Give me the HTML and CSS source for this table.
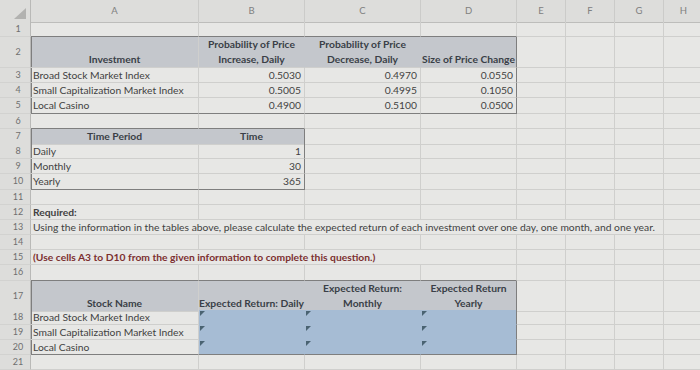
FILE: index.html
```html
<!DOCTYPE html>
<html>
<head>
<meta charset="utf-8">
<link rel="stylesheet" href="styles.css">
</head>
<body>
<div class="sheet">
  <div class="row hdr">
    <div class="c rh corner"><span class="tri"></span></div>
    <div class="c ch">A</div><div class="c ch">B</div><div class="c ch">C</div><div class="c ch">D</div>
    <div class="c ch">E</div><div class="c ch">F</div><div class="c ch">G</div><div class="c ch">H</div>
  </div>
  <div class="row h1">
    <div class="c rh">1</div><div class="c eb"></div><div class="c eb"></div><div class="c eb"></div><div class="c eb"></div>
    <div class="c"></div><div class="c"></div><div class="c"></div><div class="c"></div>
  </div>
  <div class="row h2">
    <div class="c rh">2</div>
    <div class="c th bot el">Investment</div>
    <div class="c th bot nr">Probability of Price<br>Increase, Daily</div>
    <div class="c th bot nr">Probability of Price<br>Decrease, Daily</div>
    <div class="c th bot er">Size of Price Change</div>
    <div class="c"></div><div class="c"></div><div class="c"></div><div class="c"></div>
  </div>
  <div class="row">
    <div class="c rh">3</div><div class="c tx el">Broad Stock Market Index</div>
    <div class="c num">0.5030</div><div class="c num">0.4970</div><div class="c num er">0.0550</div>
    <div class="c"></div><div class="c"></div><div class="c"></div><div class="c"></div>
  </div>
  <div class="row">
    <div class="c rh">4</div><div class="c tx el">Small Capitalization Market Index</div>
    <div class="c num">0.5005</div><div class="c num">0.4995</div><div class="c num er">0.1050</div>
    <div class="c"></div><div class="c"></div><div class="c"></div><div class="c"></div>
  </div>
  <div class="row">
    <div class="c rh">5</div><div class="c tx el eb">Local Casino</div>
    <div class="c num eb">0.4900</div><div class="c num eb">0.5100</div><div class="c num er eb">0.0500</div>
    <div class="c"></div><div class="c"></div><div class="c"></div><div class="c"></div>
  </div>
  <div class="row">
    <div class="c rh">6</div><div class="c eb"></div><div class="c eb"></div><div class="c"></div><div class="c"></div>
    <div class="c"></div><div class="c"></div><div class="c"></div><div class="c"></div>
  </div>
  <div class="row">
    <div class="c rh">7</div><div class="c th mid el nr">Time Period</div><div class="c th mid er">Time</div>
    <div class="c"></div><div class="c"></div><div class="c"></div><div class="c"></div><div class="c"></div><div class="c"></div>
  </div>
  <div class="row">
    <div class="c rh">8</div><div class="c tx el">Daily</div><div class="c num er">1</div>
    <div class="c"></div><div class="c"></div><div class="c"></div><div class="c"></div><div class="c"></div><div class="c"></div>
  </div>
  <div class="row">
    <div class="c rh">9</div><div class="c tx el">Monthly</div><div class="c num er">30</div>
    <div class="c"></div><div class="c"></div><div class="c"></div><div class="c"></div><div class="c"></div><div class="c"></div>
  </div>
  <div class="row">
    <div class="c rh">10</div><div class="c tx el eb">Yearly</div><div class="c num er eb">365</div>
    <div class="c"></div><div class="c"></div><div class="c"></div><div class="c"></div><div class="c"></div><div class="c"></div>
  </div>
  <div class="row">
    <div class="c rh">11</div><div class="c"></div><div class="c"></div><div class="c"></div><div class="c"></div>
    <div class="c"></div><div class="c"></div><div class="c"></div><div class="c"></div>
  </div>
  <div class="row">
    <div class="c rh">12</div><div class="c tx bold">Required:</div><div class="c"></div><div class="c"></div><div class="c"></div>
    <div class="c"></div><div class="c"></div><div class="c"></div><div class="c"></div>
  </div>
  <div class="row">
    <div class="c rh">13</div>
    <div class="c tx span7">Using the information in the tables above, please calculate the expected return of each investment over one day, one month, and one year.</div>
    <div class="c"></div>
  </div>
  <div class="row">
    <div class="c rh">14</div><div class="c"></div><div class="c"></div><div class="c"></div><div class="c"></div>
    <div class="c"></div><div class="c"></div><div class="c"></div><div class="c"></div>
  </div>
  <div class="row">
    <div class="c rh">15</div>
    <div class="c tx bold red span4">(Use cells A3 to D10 from the given information to complete this question.)</div>
    <div class="c"></div><div class="c"></div><div class="c"></div><div class="c"></div>
  </div>
  <div class="row">
    <div class="c rh">16</div><div class="c eb"></div><div class="c eb"></div><div class="c eb"></div><div class="c eb"></div>
    <div class="c"></div><div class="c"></div><div class="c"></div><div class="c"></div>
  </div>
  <div class="row h17">
    <div class="c rh">17</div>
    <div class="c th bot el">Stock Name</div>
    <div class="c th bot nr">Expected Return: Daily</div>
    <div class="c th bot nr">Expected Return:<br>Monthly</div>
    <div class="c th bot er">Expected Return<br>Yearly</div>
    <div class="c"></div><div class="c"></div><div class="c"></div><div class="c"></div>
  </div>
  <div class="row">
    <div class="c rh">18</div><div class="c tx el">Broad Stock Market Index</div>
    <div class="c fill flag"></div><div class="c fill flag"></div><div class="c fill flag er"></div>
    <div class="c"></div><div class="c"></div><div class="c"></div><div class="c"></div>
  </div>
  <div class="row">
    <div class="c rh">19</div><div class="c tx el">Small Capitalization Market Index</div>
    <div class="c fill flag"></div><div class="c fill flag"></div><div class="c fill flag er"></div>
    <div class="c"></div><div class="c"></div><div class="c"></div><div class="c"></div>
  </div>
  <div class="row">
    <div class="c rh">20</div><div class="c tx el eb">Local Casino</div>
    <div class="c fill flag eb"></div><div class="c fill flag eb"></div><div class="c fill flag er eb"></div>
    <div class="c"></div><div class="c"></div><div class="c"></div><div class="c"></div>
  </div>
  <div class="row">
    <div class="c rh">21</div><div class="c"></div><div class="c"></div><div class="c"></div><div class="c"></div>
    <div class="c"></div><div class="c"></div><div class="c"></div><div class="c"></div>
  </div>
</div>
</body>
</html>
```
FILE: styles.css
```css
html, body {
  margin: 0;
  padding: 0;
  background: #e7e7e5;
}
.sheet {
  width: 700px;
  height: 370px;
  overflow: hidden;
  font-family: Lato, "Open Sans", sans-serif;
  font-size: 10.3px;
  color: #424242;
}
.row {
  display: grid;
  grid-template-columns: 31px 168px 106px 116px 96px 49px 49px 49px 40px;
  height: 15.2px;
}
.row.hdr { height: 22px; }
.row.h1 { height: 15px; }
.row.h2 { height: 31px; }
.row.h17 { height: 29px; }
.c {
  box-sizing: border-box;
  border-right: 1px solid #cfcfcd;
  border-bottom: 1px solid #cfcfcd;
  white-space: nowrap;
  line-height: 14px;
  position: relative;
}
.c.rh {
  background: #dddddb;
  border-right: 1px solid #b9b9b7;
  border-bottom: 1px solid #d2d2d0;
  color: #6f6f6f;
  font-size: 9px;
  text-align: center;
  padding-left: 6px;
}
.row.h2 .c.rh, .row.h17 .c.rh { display: flex; align-items: center; justify-content: center; }
.c.ch {
  background: #dddddb;
  border-bottom: 1px solid #bdbdbb;
  border-right: 1px solid #cbcbc9;
  color: #808080;
  font-size: 9.5px;
  text-align: center;
  line-height: 22px;
}
.corner { border-bottom: 1px solid #bdbdbb !important; }
.tri {
  position: absolute;
  right: 4px;
  bottom: 3px;
  width: 0;
  height: 0;
  border-left: 12px solid transparent;
  border-bottom: 11px solid #b2b2b0;
}
.tx { padding-left: 2px; }
.num { text-align: right; padding-right: 3px; }
.bold { font-weight: bold; }
.red { color: #7c2f30; }
.th {
  background: #c4c7cc;
  font-weight: bold;
  text-align: center;
  color: #3a3f47;
}
.th.bot {
  display: flex;
  flex-direction: column;
  justify-content: flex-end;
  align-items: center;
  line-height: 15px;
  padding-bottom: 0;
}
.th.mid { line-height: 15px; }
.nr { border-right-color: #c4c7cc; }
.fill { background: #a6bcd4; border-right-color: #a6bcd4; border-bottom-color: #a6bcd4; }
.flag::before {
  content: "";
  position: absolute;
  left: 1px;
  top: 1px;
  width: 0;
  height: 0;
  border-top: 5px solid #4a6372;
  border-right: 5px solid transparent;
}
.el { box-shadow: inset 1px 0 #7e7e7e; }
.er { border-right: 1px solid #7e7e7e; }
.eb { border-bottom: 1px solid #7e7e7e; }
.span7 { grid-column: span 7; }
.span4 { grid-column: span 4; }
```
